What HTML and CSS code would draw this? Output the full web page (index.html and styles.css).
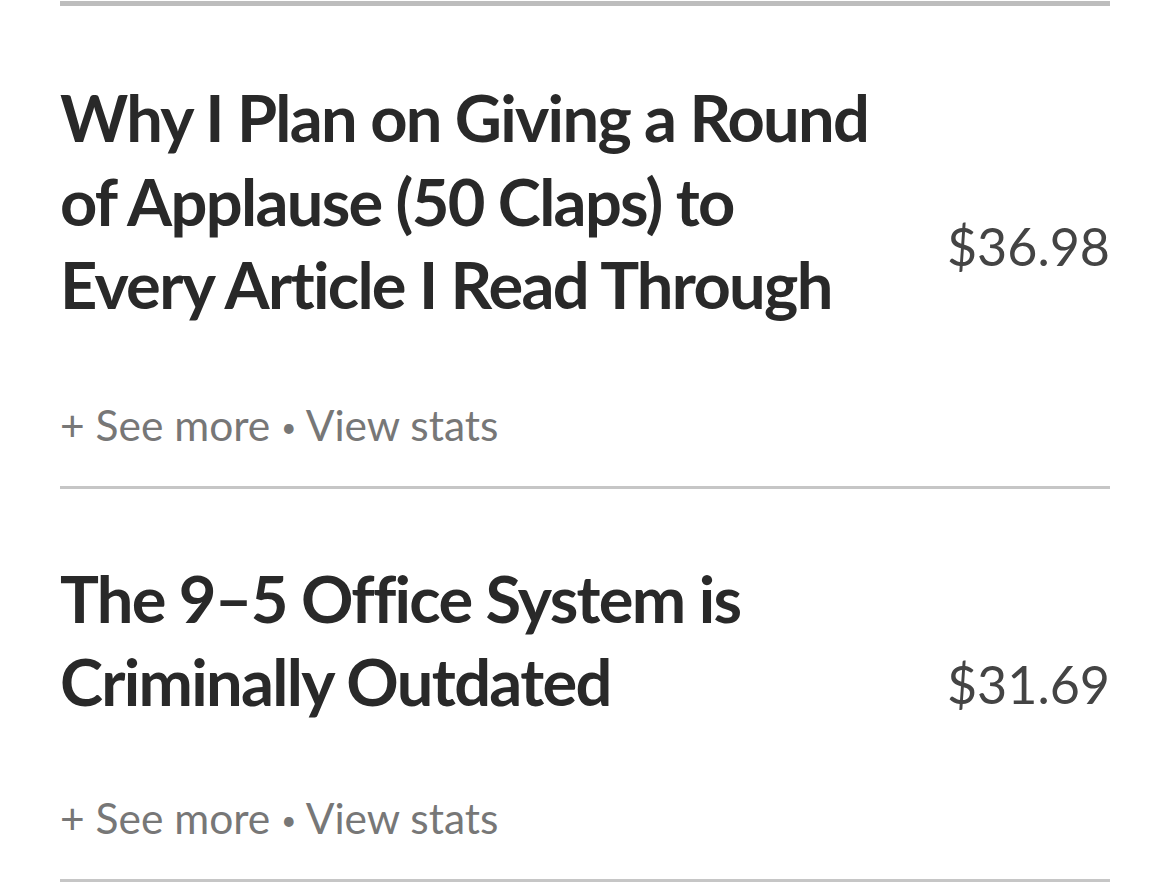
FILE: index.html
```html
<!DOCTYPE html>
<html lang="en">
<head>
    <meta charset="UTF-8">
    <meta name="viewport" content="width=device-width, initial-scale=1.0">
    <title>Earnings</title>
    <link rel="stylesheet" href="styles.css">
</head>
<body>

    <div class="story-list">
        <div class="story">
            <div class="story-info">
                <h2 class="story-title">Why I Plan on Giving a Round of Applause (50 Claps) to Every Article I Read Through</h2>
                <div class="story-links">+ See more <span class="dot">&bull;</span> View stats</div>
            </div>
            <div class="story-amount">$36.98</div>
        </div>

        <div class="story">
            <div class="story-info">
                <h2 class="story-title">The 9–5 Office System is Criminally Outdated</h2>
                <div class="story-links">+ See more <span class="dot">&bull;</span> View stats</div>
            </div>
            <div class="story-amount">$31.69</div>
        </div>
    </div>

</body>
</html>
```

FILE: styles.css
```css
body {
    font-family: Lato, "Noto Sans", sans-serif;
    background-color: #fff;
    margin: 0;
    padding: 1px 60px 0;
}

.story-list {
    border-top: 5px solid #bdbdbd;
}

.story {
    display: flex;
    justify-content: space-between;
    align-items: center;
    border-bottom: 3px solid #c6c6c6;
}

.story-info {
    flex: 0 1 820px;
    padding: 70px 0 35px;
}

.story + .story .story-info {
    padding-top: 68px;
}

.story-title {
    margin: 0 0 74px;
    font-size: 65px;
    line-height: 83.5px;
    font-weight: 700;
    letter-spacing: -1.7px;
    color: #292929;
}

.story + .story .story-title {
    margin-bottom: 70px;
}

.story-links {
    font-size: 42.5px;
    line-height: 48px;
    color: #777;
}

.story-links .dot {
    font-size: 26px;
    vertical-align: 4px;
}

.story-amount {
    font-size: 52px;
    color: #444;
}
```
